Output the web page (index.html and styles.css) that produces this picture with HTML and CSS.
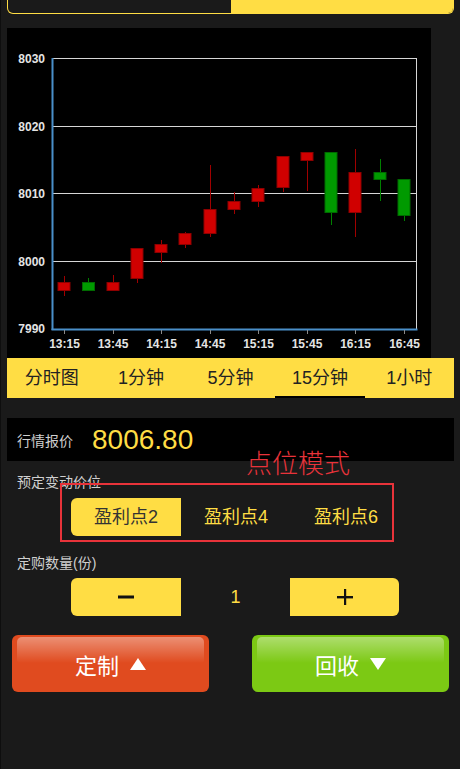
FILE: index.html
```html
<!DOCTYPE html>
<html lang="zh">
<head>
  <meta charset="UTF-8" />
  <title>行情</title>
  <link rel="stylesheet" href="styles.css">
</head>
<body>

<div class="page">
  <!-- tabs atas -->
  <div class="top-tabs">
    <div class="tab"></div>
    <div class="tab on"></div>
  </div>

  <!-- K线 -->
  <div class="chart">
    <svg width="424" height="330" viewBox="0 0 424 330">
      <g stroke="#d6d6d6" stroke-width="1">
        <line x1="46" y1="30.5" x2="410" y2="30.5" />
        <line x1="46" y1="98.5" x2="410" y2="98.5" />
        <line x1="46" y1="165.5" x2="410" y2="165.5" />
        <line x1="46" y1="233.5" x2="410" y2="233.5" />
        <line x1="409.5" y1="30" x2="409.5" y2="301" />
      </g>
      <g class="ylab" text-anchor="end">
        <text x="38" y="35">8030</text>
        <text x="38" y="103">8020</text>
        <text x="38" y="170">8010</text>
        <text x="38" y="238">8000</text>
        <text x="38" y="305">7990</text>
      </g>

      <!-- candles -->
      <g class="up">
        <line x1="57.5" y1="248" x2="57.5" y2="268" /><rect x="51" y="254.5" width="12" height="8" />
        <line x1="106.5" y1="247" x2="106.5" y2="263" /><rect x="100" y="254.5" width="12" height="8" />
        <line x1="130.5" y1="220" x2="130.5" y2="255" /><rect x="124" y="220.5" width="12" height="30" />
        <line x1="154.5" y1="212" x2="154.5" y2="235" /><rect x="148" y="216.5" width="12" height="8" />
        <line x1="178.5" y1="204" x2="178.5" y2="220" /><rect x="172" y="205.5" width="12" height="11" />
        <line x1="203.5" y1="137" x2="203.5" y2="209" /><rect x="197" y="181.5" width="12" height="24" />
        <line x1="227.5" y1="164" x2="227.5" y2="186" /><rect x="221" y="173.5" width="12" height="8" />
        <line x1="251.5" y1="157" x2="251.5" y2="179" /><rect x="245" y="160.5" width="12" height="13" />
        <line x1="276.5" y1="128" x2="276.5" y2="164" /><rect x="270" y="128.5" width="12" height="31" />
        <line x1="300.5" y1="124" x2="300.5" y2="163" /><rect x="294" y="124.5" width="12" height="8" />
        <line x1="348.5" y1="121" x2="348.5" y2="209" /><rect x="342" y="144.5" width="12" height="40" />
      </g>
      <g class="down">
        <line x1="81.5" y1="250" x2="81.5" y2="263" /><rect x="75.5" y="254.5" width="12" height="8" />
        <line x1="324.5" y1="124" x2="324.5" y2="197" /><rect x="318" y="124.5" width="12" height="60" />
        <line x1="373.5" y1="131" x2="373.5" y2="173" /><rect x="367" y="144.5" width="12" height="7" />
        <line x1="397.5" y1="151" x2="397.5" y2="193" /><rect x="391" y="151.5" width="12" height="36" />
      </g>

      <rect x="44.5" y="30" width="2" height="272" fill="#4a8fc9" />
      <rect x="44.5" y="300.5" width="366" height="2" fill="#4a8fc9" />
      <g stroke="#8a8a8a" stroke-width="1">
        <line x1="57.5" y1="302" x2="57.5" y2="306" />
        <line x1="106.5" y1="302" x2="106.5" y2="306" />
        <line x1="154.5" y1="302" x2="154.5" y2="306" />
        <line x1="203.5" y1="302" x2="203.5" y2="306" />
        <line x1="251.5" y1="302" x2="251.5" y2="306" />
        <line x1="300.5" y1="302" x2="300.5" y2="306" />
        <line x1="348.5" y1="302" x2="348.5" y2="306" />
        <line x1="397.5" y1="302" x2="397.5" y2="306" />
      </g>
      <g class="xlab" text-anchor="middle">
        <text x="57.5" y="320">13:15</text>
        <text x="106" y="320">13:45</text>
        <text x="154.5" y="320">14:15</text>
        <text x="203" y="320">14:45</text>
        <text x="251.5" y="320">15:15</text>
        <text x="300" y="320">15:45</text>
        <text x="348.5" y="320">16:15</text>
        <text x="397.5" y="320">16:45</text>
      </g>
    </svg>
  </div>

  <div class="periods">
    <div class="period">分时图</div>
    <div class="period">1分钟</div>
    <div class="period">5分钟</div>
    <div class="period on">15分钟</div>
    <div class="period">1小时</div>
  </div>

  <div class="quote">
    <span class="quote-label">行情报价</span>
    <span class="quote-value">8006.80</span>
  </div>

  <div class="field-label">预定变动价位</div>
  <div class="options">
    <div class="option on">盈利点2</div>
    <div class="option">盈利点4</div>
    <div class="option">盈利点6</div>
  </div>

  <div class="field-label label-qty">定购数量(份)</div>
  <div class="stepper">
    <div class="step minus">
      <svg width="16" height="4" viewBox="0 0 16 4"><rect y="0.5" width="16" height="3" fill="#111" /></svg>
    </div>
    <div class="count">1</div>
    <div class="step plus">
      <svg width="16" height="16" viewBox="0 0 16 16"><rect y="7" width="16" height="2.4" fill="#111" /><rect x="7" width="2.2" height="16" fill="#111" /></svg>
    </div>
  </div>

  <div class="actions">
    <div class="btn btn-buy">定制
      <svg width="16" height="12" viewBox="0 0 16 12"><polygon points="8,0 16,12 0,12" fill="#fff" /></svg>
    </div>
    <div class="btn btn-sell">回收
      <svg width="16" height="12" viewBox="0 0 16 12"><polygon points="0,0 16,0 8,12" fill="#fff" /></svg>
    </div>
  </div>

  <!-- anotasi -->
  <div class="mode-note">点位模式</div>
  <div class="mode-box"></div>
</div>

</body>
</html>
```

FILE: styles.css
```css
* {
  box-sizing: border-box;
}
body {
  margin: 0;
  background: #1a1a1a;
  font-family: "Liberation Sans", "Noto Sans CJK SC", sans-serif;
}

.page {
  position: relative;
  height: 769px;
  padding: 0 6px 0 7px;
  box-shadow: inset 1px 0 #0e0e0e;
}

.top-tabs {
  display: flex;
  height: 14px;
  border: 1px solid #ffdd44;
  border-top: none;
  border-radius: 0 0 6px 6px;
  overflow: hidden;
}
.top-tabs .tab { flex: 1; }
.top-tabs .tab.on { background: #ffdd44; }

.chart {
  margin-top: 14px;
  width: 424px;
  height: 330px;
  background: #000;
}
.chart svg { display: block; }

.ylab, .xlab {
  font-family: "Liberation Sans", Arial, sans-serif;
  font-size: 12px;
  font-weight: bold;
  fill: #e4e4e4;
}
.up rect { fill: #d00000; stroke: #8e0000; }
.up line { stroke: #a00000; }
.down rect { fill: #009a00; stroke: #006a00; }
.down line { stroke: #008000; }

.periods {
  display: flex;
  height: 40px;
  background: #ffdd44;
}
.period {
  flex: 1;
  text-align: center;
  line-height: 40px;
  font-size: 18px;
  color: #222;
}
.period.on { box-shadow: inset 0 -2px #000; }

.quote {
  display: flex;
  align-items: center;
  gap: 19px;
  height: 43px;
  margin-top: 20px;
  padding-left: 10px;
  background: #000;
}
.quote-label {
  font-size: 14px;
  color: #cfcfcf;
}
.quote-value {
  font-size: 28px;
  color: #ffdd44;
}

.field-label {
  margin: 13px 0 0 10px;
  font-size: 14px;
  line-height: 16px;
  color: #cfcfcf;
}
.label-qty { margin-top: 19px; }

.options {
  display: flex;
  width: 330px;
  height: 38px;
  margin: 8px 0 0 64px;
}
.option {
  flex: 1;
  text-align: center;
  line-height: 38px;
  font-size: 18px;
  color: #ffdd44;
}
.option.on {
  background: #ffdd44;
  color: #333;
  border-radius: 6px 0 0 6px;
}

.stepper {
  display: flex;
  width: 328px;
  height: 38px;
  margin: 7px 0 0 64px;
}
.step, .count {
  display: flex;
  align-items: center;
  justify-content: center;
}
.step {
  width: 110px;
  background: #ffdd44;
}
.step.minus { border-radius: 6px 0 0 6px; }
.step.plus { width: 109px; border-radius: 0 6px 6px 0; }
.count {
  width: 109px;
  font-size: 18px;
  color: #ffdd44;
}

.actions {
  display: flex;
  justify-content: space-between;
  margin-top: 19px;
  padding: 0 5px;
}
.btn {
  position: relative;
  display: flex;
  align-items: center;
  justify-content: center;
  gap: 11px;
  width: 197px;
  height: 57px;
  border-radius: 6px;
  font-size: 22px;
  color: #fff;
  overflow: hidden;
}
.btn::before {
  content: "";
  position: absolute;
  top: 2px; left: 5px; right: 5px;
  height: 26px;
  border-radius: 5px 5px 3px 3px;
  background: linear-gradient(rgba(255, 255, 255, 0.38), rgba(255, 255, 255, 0));
}
.btn svg { position: relative; }
.btn-buy { background: #e04b1f; }
.btn-sell { background: #7cc914; }

.mode-note {
  position: absolute;
  left: 246px;
  top: 447px;
  font-family: "Noto Sans CJK SC", sans-serif;
  font-size: 26px;
  font-weight: 300;
  line-height: 30px;
  color: #e8333a;
}
.mode-box {
  position: absolute;
  left: 60px;
  top: 483px;
  width: 334px;
  height: 59px;
  border: 2px solid #e8333a;
}
```
